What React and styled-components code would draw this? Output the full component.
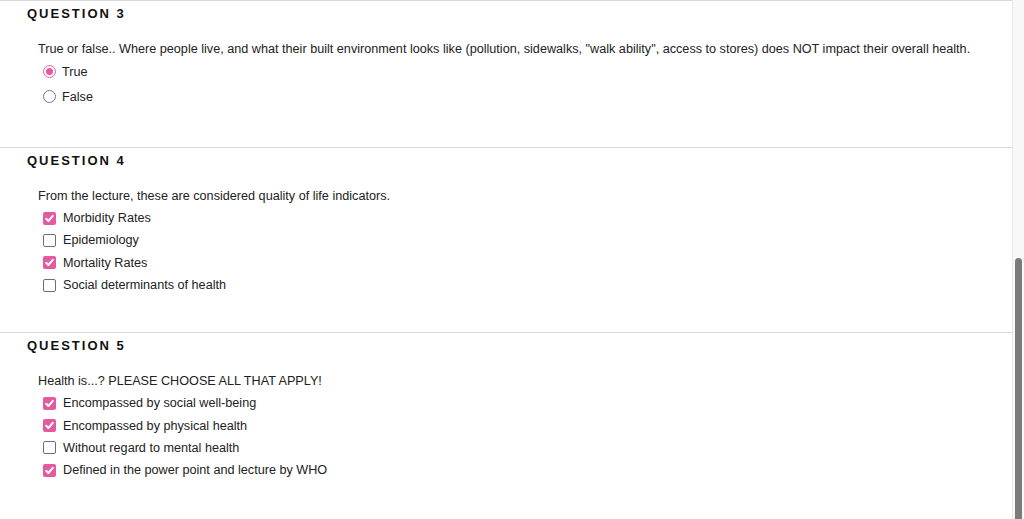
import React from 'react';
import styled, { createGlobalStyle } from 'styled-components';

const GlobalStyle = createGlobalStyle`
  html, body {
    margin: 0;
    padding: 0;
    background: #fff;
  }
  body {
    font-family: "Liberation Sans", Arial, sans-serif;
    color: #222;
  }
`;

const questions = [
  {
    number: 3,
    type: 'radio',
    prompt:
      'True or false.. Where people live, and what their built environment looks like (pollution, sidewalks, "walk ability", access to stores) does NOT impact their overall health.',
    options: [
      { label: 'True', checked: true },
      { label: 'False', checked: false },
    ],
  },
  {
    number: 4,
    type: 'check',
    prompt: 'From the lecture, these are considered quality of life indicators.',
    options: [
      { label: 'Morbidity Rates', checked: true },
      { label: 'Epidemiology', checked: false },
      { label: 'Mortality Rates', checked: true },
      { label: 'Social determinants of health', checked: false },
    ],
  },
  {
    number: 5,
    type: 'check',
    prompt: 'Health is...? PLEASE CHOOSE ALL THAT APPLY!',
    options: [
      { label: 'Encompassed by social well-being', checked: true },
      { label: 'Encompassed by physical health', checked: true },
      { label: 'Without regard to mental health', checked: false },
      { label: 'Defined in the power point and lecture by WHO', checked: true },
    ],
  },
];

const App = () => {
  return (
    <Page>
      <GlobalStyle />
      <Main>
        {questions.map((q) => {
          const isRadio = q.type === 'radio';
          return (
            <Section key={q.number} $radio={isRadio}>
              <Heading>QUESTION {q.number}</Heading>
              <Prompt $radio={isRadio}>{q.prompt}</Prompt>
              <OptionList>
                {q.options.map((o) => (
                  <Option key={o.label} $radio={isRadio}>
                    {isRadio ? (
                      <Radio $checked={o.checked} />
                    ) : (
                      <Checkbox $checked={o.checked}>
                        {o.checked && (
                          <svg width="11" height="11" viewBox="0 0 11 11">
                            <path
                              d="M2.2 5.8 L4.4 8 L8.8 2.8"
                              fill="none"
                              stroke="#fff"
                              strokeWidth="2"
                              strokeLinecap="round"
                              strokeLinejoin="round"
                            />
                          </svg>
                        )}
                      </Checkbox>
                    )}
                    <OptionLabel>{o.label}</OptionLabel>
                  </Option>
                ))}
              </OptionList>
            </Section>
          );
        })}
      </Main>
      <ScrollTrack>
        <ScrollThumb />
      </ScrollTrack>
    </Page>
  );
};

const Page = styled.div`
  display: flex;
  width: 100vw;
  height: 519px;
  overflow: hidden;
`;

const Main = styled.div`
  flex: 1;
  display: flex;
  flex-direction: column;
`;

const Section = styled.section`
  border-top: 1px solid #dadada;
  padding: 5px 0 ${(p) => (p.$radio ? '38px' : '36px')} 27px;
`;

const Heading = styled.h2`
  margin: 0;
  font-size: 13px;
  line-height: 16px;
  font-weight: bold;
  letter-spacing: 2px;
  color: #111;
`;

const Prompt = styled.p`
  margin: 19px 0 ${(p) => (p.$radio ? '2px' : '3px')} 11px;
  font-size: 12.65px;
  line-height: 16px;
  color: #222;
`;

const OptionList = styled.div`
  display: flex;
  flex-direction: column;
  padding-left: 16px;
`;

const Option = styled.label`
  display: flex;
  align-items: center;
  gap: ${(p) => (p.$radio ? '6px' : '7px')};
  height: ${(p) => (p.$radio ? '25px' : '22.3px')};
  font-size: 12.65px;
`;

const Radio = styled.span`
  box-sizing: border-box;
  width: 13px;
  height: 13px;
  border-radius: 50%;
  border: ${(p) => (p.$checked ? '1.5px solid #e8609f' : '1px solid #7a7a7a')};
  display: flex;
  align-items: center;
  justify-content: center;
  flex-shrink: 0;

  &::after {
    content: '';
    display: ${(p) => (p.$checked ? 'block' : 'none')};
    width: 7px;
    height: 7px;
    border-radius: 50%;
    background: #e55a9c;
  }
`;

const Checkbox = styled.span`
  box-sizing: border-box;
  width: 13px;
  height: 13px;
  border-radius: 2px;
  border: ${(p) => (p.$checked ? 'none' : '1px solid #6f6f6f')};
  background: ${(p) => (p.$checked ? '#e5599d' : '#fff')};
  display: flex;
  align-items: center;
  justify-content: center;
  flex-shrink: 0;
`;

const OptionLabel = styled.span`
  color: #222;
  line-height: 16px;
`;

const ScrollTrack = styled.div`
  width: 11px;
  border-left: 1px solid #e8e8e8;
  background: #f8f8f8;
  display: flex;
  flex-direction: column;
  align-items: center;
`;

const ScrollThumb = styled.div`
  margin-top: 258px;
  width: 7px;
  flex: 1;
  border-radius: 4px 4px 0 0;
  background: #7b7b7b;
`;

export default App;
